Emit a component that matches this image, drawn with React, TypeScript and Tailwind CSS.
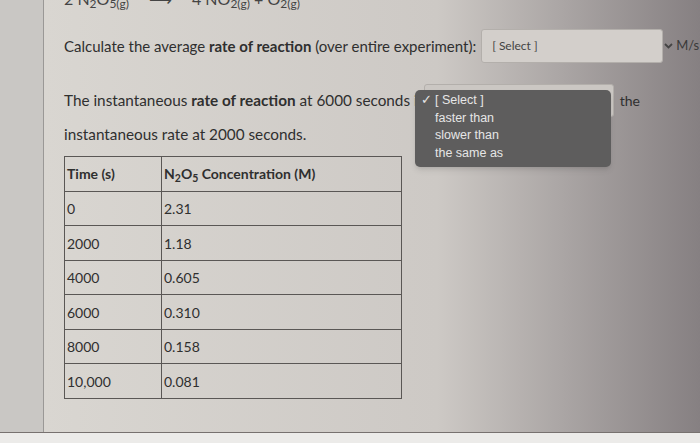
import React from 'react';

const rows = [
  ['0', '2.31'],
  ['2000', '1.18'],
  ['4000', '0.605'],
  ['6000', '0.310'],
  ['8000', '0.158'],
  ['10,000', '0.081'],
];

const Chevron = () => (
  <svg width="9" height="6" viewBox="0 0 9 6" className="text-[#444]">
    <path d="M1 1l3.5 3.5L8 1" fill="none" stroke="currentColor" strokeWidth="1.8" />
  </svg>
);

export default function App() {
  return (
    <div className="flex h-[443px] w-[700px] flex-col overflow-hidden bg-[#ecebe9] font-['Lato','Open_Sans',sans-serif] text-[#2f2f2f]">
      <div className="flex h-[433px] border-b border-[#77716f]">
        {/* left gutter */}
        <div className="w-[44px] shrink-0 border-r border-[#9a9896] bg-[#c9c7c4]" />

        <div className="relative flex-1 overflow-hidden bg-linear-to-r from-[#d9d6d1] via-[#cdc9c5] via-60% to-[#868082] pl-[20px]">
          {/* reaction, cut off at the top */}
          <div className="-mt-[13px] flex items-baseline gap-[10px] text-[16px] text-[#444]">
            <span>
              2 N<sub>2</sub>O<sub>5(g)</sub>
            </span>
            <span className="px-[10px]">⟶</span>
            <span>
              4 NO<sub>2(g)</sub> + O<sub>2(g)</sub>
            </span>
          </div>

          {/* question 1 */}
          <div className="mt-[18px] flex items-center whitespace-nowrap text-[15px]">
            <span>
              Calculate the average <b className="font-bold">rate of reaction</b> (over entire experiment):
            </span>
            <div className="ml-[5px] flex h-[34px] w-[182px] shrink-0 items-center rounded-[3px] border border-[#b3afab] bg-[#d3cfcb] pl-[10px] pr-[4px] text-[12px] text-[#444]">
              <span>[ Select ]</span>
            </div>
            <span className="ml-[1px] shrink-0">
              <Chevron />
            </span>
            <span className="ml-[3px] text-[13px] text-[#3a3a3a]">M/s</span>
          </div>

          {/* question 2 */}
          <div className="mt-[21px] flex items-center whitespace-nowrap text-[15.3px]">
            <span>
              The instantaneous <b className="font-bold">rate of reaction</b> at 6000 seconds i
            </span>
            <div className="ml-[6px] flex h-[33px] w-[190px] shrink-0 items-center justify-end rounded-[3px] border border-[#b3afab] bg-[#cbc7c3] pr-[2px]">
              <Chevron />
            </div>
            <span className="ml-[6px] text-[14px]">the</span>
          </div>
          <div className="mt-[6px] text-[15.3px]">instantaneous rate at 2000 seconds.</div>

          {/* open dropdown menu */}
          <div className="absolute left-[371px] top-[90px] w-[196px] rounded-[5px] bg-[#5e5d5d] pb-[5px] pt-[2px] font-['Liberation_Sans',sans-serif] text-[12.5px] leading-[17.5px] text-[#e6e6e6] shadow-md">
            <div className="relative pl-[20px]">
              <span className="absolute left-[6px] top-0">✓</span>
              [ Select ]
            </div>
            <div className="pl-[20px]">faster than</div>
            <div className="pl-[20px]">slower than</div>
            <div className="pl-[20px]">the same as</div>
          </div>

          {/* data table */}
          <table className="mt-[10px] w-[338px] border-collapse text-[14px]">
            <tbody>
              <tr className="h-[35px]">
                <td className="w-[97px] border border-[#5a5755] pl-[2px] font-bold">Time (s)</td>
                <td className="border border-[#5a5755] pl-[2px] font-bold">
                  N<sub>2</sub>O<sub>5</sub> Concentration (M)
                </td>
              </tr>
              {rows.map(([t, c]) => (
                <tr key={t} className="h-[34.5px]">
                  <td className="border border-[#5a5755] pl-[2px]">{t}</td>
                  <td className="border border-[#5a5755] pl-[2px]">{c}</td>
                </tr>
              ))}
            </tbody>
          </table>
        </div>
      </div>
    </div>
  );
}
